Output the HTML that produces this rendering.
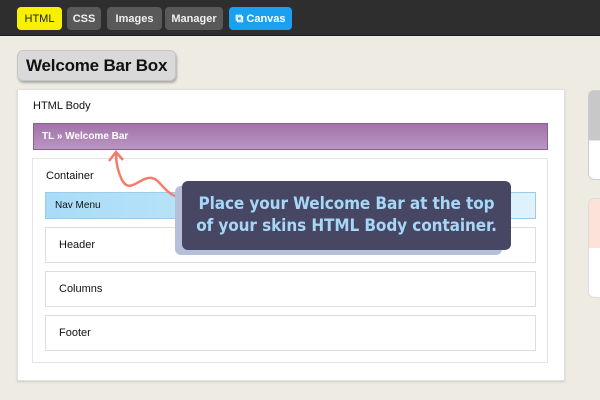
<!DOCTYPE html>
<html><head><style>
*{margin:0;padding:0;box-sizing:border-box}
body{width:600px;height:400px;overflow:hidden;background:#eeebe3;font-family:"Liberation Sans",sans-serif;position:relative}
.top{position:absolute;left:0;top:0;width:600px;height:36px;background:#2e2e2e;border-bottom:1px solid #1a1a1a}
.b{position:absolute;top:7px;height:23px;border-radius:4px;background:#595959;color:#f0f0f0;font-size:11px;font-weight:bold;line-height:24px;text-align:center}
.a{position:absolute}
.box{position:absolute;background:#fff;border:1px solid #ddd}
.lbl{position:absolute;font-size:11px;color:#111}
</style></head><body>
<div class="top"></div>
<div class="b" style="left:17px;width:45px;background:#f7f000;color:#222;font-weight:normal">HTML</div>
<div class="b" style="left:67px;width:34px">CSS</div>
<div class="b" style="left:107px;width:55px">Images</div>
<div class="b" style="left:165px;width:58px">Manager</div>
<div class="b" style="left:229px;width:63px;background:#1aa0f0;color:#fff">⧉ Canvas</div>
<div class="a" style="left:17px;top:50px;width:159px;height:31px;background:#d9d9d9;border:1px solid #c6c6c6;border-radius:6px;box-shadow:1px 2px 2px #aaa;font-size:17px;font-weight:bold;line-height:29px;padding-left:8px;color:#111;letter-spacing:-0.2px">Welcome Bar Box</div>
<div class="box" style="left:17px;top:89px;width:548px;height:292px;border-color:#e2e0da;box-shadow:0 1px 2px #ccc"></div>
<div class="lbl" style="left:33px;top:100px">HTML Body</div>
<div class="a" style="left:33px;top:123px;width:515px;height:27px;background:linear-gradient(#a373aa,#b996c2);border:1px solid #8e5e98;color:#fff;font-size:10px;font-weight:bold;line-height:25px;padding-left:8px">TL » Welcome Bar</div>
<div class="box" style="left:32px;top:158px;width:516px;height:205px;border-color:#e4e4e4"></div>
<div class="lbl" style="left:46px;top:170px">Container</div>
<div class="a" style="left:45px;top:192px;width:491px;height:27px;background:linear-gradient(90deg,#a8dcf8,#dff2fd);border:1px solid #9ccde8;font-size:10px;line-height:25px;padding-left:9px;color:#111">Nav Menu</div>
<div class="box" style="left:45px;top:227px;width:491px;height:36px"><span class="lbl" style="left:13px;top:11px">Header</span></div>
<div class="box" style="left:45px;top:271px;width:491px;height:36px"><span class="lbl" style="left:13px;top:11px">Columns</span></div>
<div class="box" style="left:45px;top:315px;width:491px;height:36px"><span class="lbl" style="left:13px;top:11px">Footer</span></div>
<div class="a" style="left:588px;top:90px;width:20px;height:90px;border:1px solid #ccc;border-radius:6px;background:linear-gradient(#c8c8c8 0 56%,#fff 56%)"></div>
<div class="a" style="left:588px;top:198px;width:20px;height:100px;border:1px solid #ddd;border-radius:6px;background:linear-gradient(#fde2da 0 50%,#fff 50%)"></div>
<svg class="a" style="left:0;top:0" width="600" height="400">
<path d="M186 198 C165 198,162 180,152 178 C140 176,130 195,122 180 C118 172,116 162,116 153" fill="none" stroke="#f47c6c" stroke-width="2.5"/>
<path d="M109 161 L116 152 L123 160" fill="none" stroke="#f47c6c" stroke-width="2.5"/>
</svg>
<div class="a" style="left:175px;top:186px;width:327px;height:69px;background:#b6bfd9;border-radius:6px"></div>
<div class="a" style="left:182px;top:181px;width:329px;height:69px;background:#474663;border-radius:6px;color:#a6d7f7;font-size:17px;font-weight:bold;line-height:22px;text-align:center;padding-top:12px;font-family:'DejaVu Sans Condensed','DejaVu Sans',sans-serif;letter-spacing:-0.1px">Place your Welcome Bar at the top<br>of your skins HTML Body container.</div>
</body></html>
